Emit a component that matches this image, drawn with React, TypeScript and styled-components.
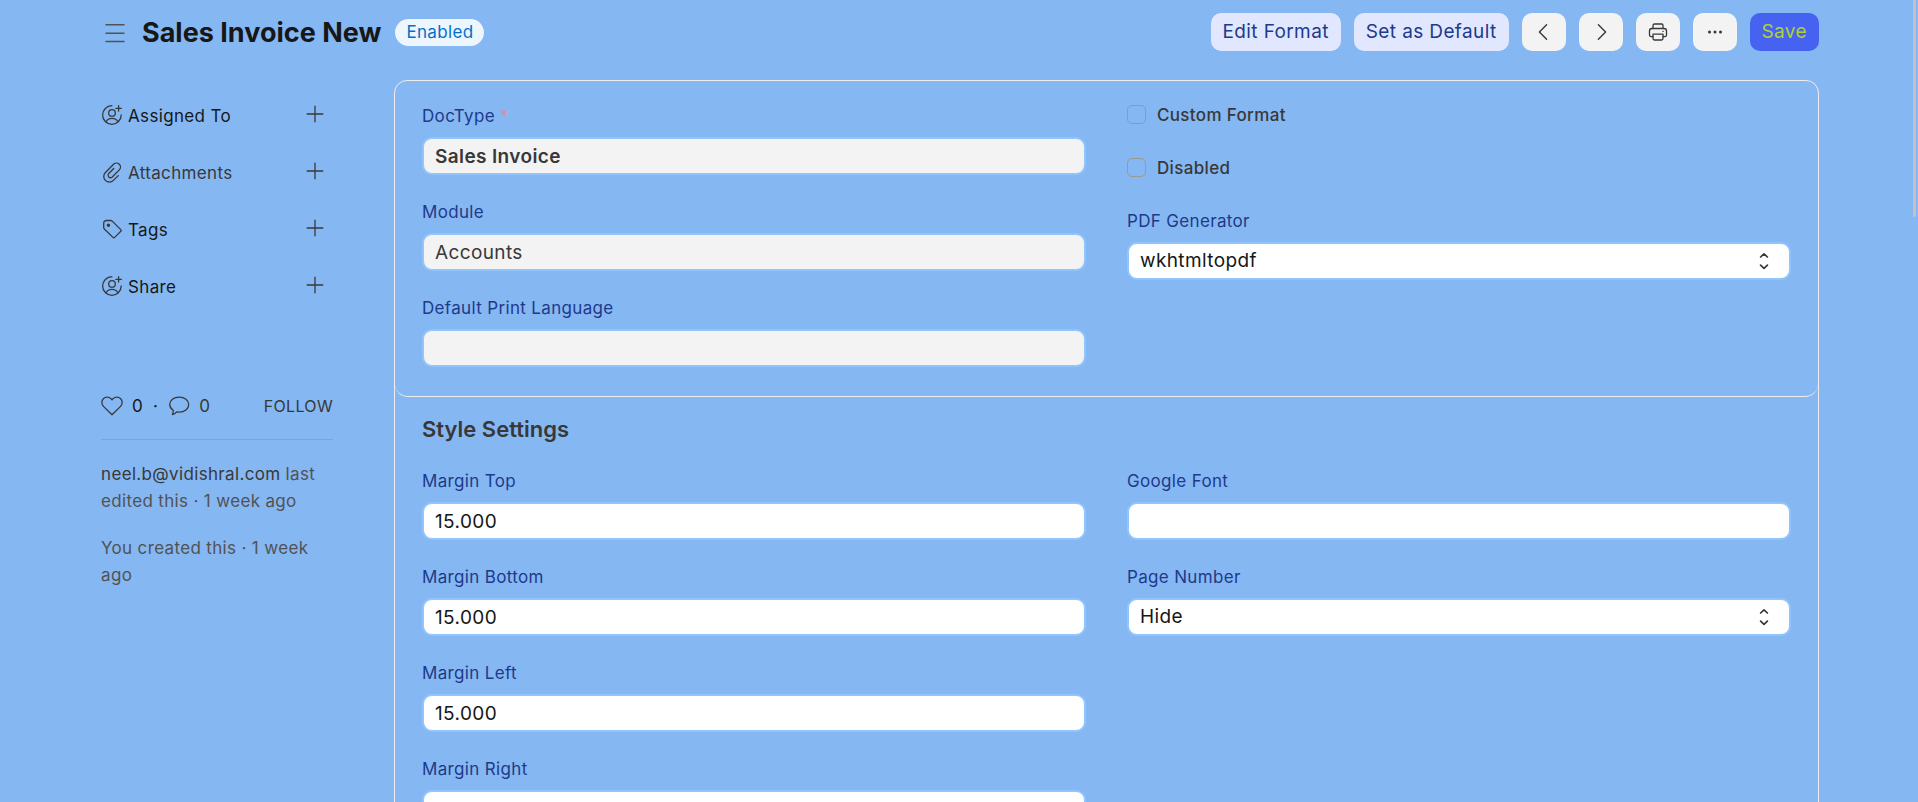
import React, { useId } from "react";
import styled, { createGlobalStyle } from "styled-components";

const GlobalStyle = createGlobalStyle`
  *, *::before, *::after { box-sizing: border-box; }
  html { scrollbar-width: none; background: #85b7f3; }
  body {
    margin: 0;
    background: #85b7f3;
    color: #383838;
    font-family: Inter, "Liberation Sans", sans-serif;
    font-size: 17px;
    line-height: 20px;
    letter-spacing: 0.02em;
  }
  button, input, select { font: inherit; letter-spacing: 0.02em; color: inherit; margin: 0; }
  button { border: 0; background: none; padding: 0; cursor: pointer; }
  svg { display: block; flex: none; }
`;

const Page = styled.div`
  padding: 0 99px 40px 101px;
`;

const Header = styled.header`
  display: flex;
  align-items: center;
  justify-content: space-between;
  height: 64px;
`;

const TitleArea = styled.div`
  display: flex;
  align-items: center;
  padding-top: 1px;
`;

const MenuButton = styled.button`
  padding: 0 4px;
  margin-right: 13px;
`;

const Title = styled.h1`
  margin: 0;
  font-size: 27px;
  line-height: 34px;
  font-weight: 700;
  letter-spacing: normal;
  color: #171717;
`;

const Status = styled.span`
  margin-left: 14px;
  padding: 0 11px;
  border-radius: 14px;
  background: #edf6fd;
  color: #0070cc;
  line-height: 27px;
`;

const Toolbar = styled.div`
  display: flex;
  gap: 13px;
`;

const ToolButton = styled.button<{ $tone?: "soft" | "primary"; $icon?: boolean }>`
  display: flex;
  align-items: center;
  justify-content: center;
  height: 38px;
  width: ${(p) => (p.$icon ? "44px" : "auto")};
  padding: 0 ${(p) => (p.$icon ? "0" : "12px")};
  border-radius: 10px;
  font-size: 19px;
  background: ${(p) =>
    p.$tone === "primary" ? "#4563f0" : p.$tone === "soft" ? "#e0e7ff" : "#f3f3f3"};
  color: ${(p) =>
    p.$tone === "primary" ? "#b1d12f" : p.$tone === "soft" ? "#1e3a8a" : "#383838"};
`;

const Body = styled.div`
  display: grid;
  grid-template-columns: 232px minmax(0, 1fr);
  column-gap: 61px;
  padding-top: 16px;
`;

const Sidebar = styled.aside`
  padding-top: 23px;
`;

const SideList = styled.ul`
  list-style: none;
  margin: 0;
  padding: 0;
  display: flex;
  flex-direction: column;
  gap: 33px;
`;

const SideItem = styled.li<{ $muted?: boolean }>`
  display: flex;
  align-items: center;
  gap: 5px;
  height: 24px;
  color: ${(p) => (p.$muted ? "#383838" : "#171717")};

  > svg { color: #383838; }
`;

const SideText = styled.span`
  padding-top: 2px;
`;

const AddButton = styled.button`
  margin: 0 9px 2px auto;
  color: #383838;
`;

const Reactions = styled.div`
  display: flex;
  align-items: center;
  gap: 10px;
  height: 24px;
  margin-top: 96px;
  color: #171717;
`;

const Count = styled.button<{ $muted?: boolean }>`
  display: flex;
  align-items: center;
  gap: 9px;
  color: ${(p) => (p.$muted ? "#383838" : "#171717")};
  svg { color: #383838; }
`;

const Follow = styled.button`
  margin-left: auto;
  color: #383838;
  font-size: 16px;
`;

const Activity = styled.div`
  margin-top: 21px;
  padding-top: 21px;
  border-top: 1px solid #78a5db;
  color: #525252;
  line-height: 27px;

  p { margin: 0 0 20px; }
  a { color: #383838; text-decoration: none; }
`;

const Form = styled.form`
  border: 1px solid #ededed;
  border-radius: 13px 13px 0 0;
`;

const Section = styled.section<{ $closed?: boolean }>`
  padding: 25px 27px 29px;
  border-bottom: ${(p) => (p.$closed ? "1px solid #ededed" : "0")};
  border-radius: 0 0 13px 13px;
`;

const SectionTitle = styled.h2`
  margin: -7px 0 28px;
  font-size: 22px;
  line-height: 28px;
  font-weight: 600;
  letter-spacing: normal;
  color: #383838;
`;

const Columns = styled.div`
  display: grid;
  grid-template-columns: repeat(2, minmax(0, 1fr));
  column-gap: 41px;
`;

const Column = styled.div`
  display: flex;
  flex-direction: column;
  gap: 27px;
`;

const FieldBox = styled.div`
  display: flex;
  flex-direction: column;
  gap: 11px;
`;

const Label = styled.label`
  color: #1e3a8a;
`;

const Required = styled.span`
  color: #f0868c;
`;

const TextInput = styled.input<{ $strong?: boolean }>`
  width: 100%;
  height: 38px;
  padding: 0 11px;
  border: 2px solid #93c5fd;
  border-radius: 10px;
  outline: 0;
  font-size: 19px;
  background: ${(p) => (p.readOnly ? "#f3f3f3" : "#ffffff")};
  color: ${(p) => (p.readOnly ? "#383838" : "#171717")};
  font-weight: ${(p) => (p.$strong ? 600 : 400)};
`;

const SelectWrap = styled.div`
  position: relative;

  svg {
    position: absolute;
    top: 10px;
    right: 21px;
    pointer-events: none;
    color: #383838;
  }
`;

const Select = styled.select`
  appearance: none;
  display: block;
  width: 100%;
  height: 38px;
  padding: 0 40px 0 11px;
  border: 2px solid #93c5fd;
  border-radius: 10px;
  outline: 0;
  font-size: 19px;
  background: #ffffff;
  color: #171717;
`;

const CheckList = styled.div`
  display: flex;
  flex-direction: column;
  gap: 33px;
  margin: -1px 0 6px;
`;

const CheckLabel = styled.label`
  display: flex;
  align-items: flex-start;
  gap: 11px;
  height: 20px;
  font-weight: 500;
  color: #383838;
`;

const CheckBox = styled.input`
  appearance: none;
  width: 19px;
  height: 19px;
  border: 1px solid #999999;
  border-radius: 5px;
`;

const ScrollThumb = styled.div`
  position: fixed;
  top: 0;
  right: 2px;
  width: 3px;
  height: 27vh;
  border-radius: 0 0 2px 2px;
  background: #c0c1c4;
`;

const stroke = {
  fill: "none",
  stroke: "currentColor",
  strokeLinecap: "round" as const,
  strokeLinejoin: "round" as const,
};

const MenuIcon = () => (
  <svg width="20" height="20" viewBox="0 0 20 20" {...stroke} stroke="#525252" strokeWidth="1.5">
    <path d="M1 1.8h18M1 10.2h18M1 18.4h18" />
  </svg>
);

const PersonAddIcon = () => (
  <svg width="22" height="22" viewBox="0 0 22 22" {...stroke} strokeWidth="1.3">
    <path d="M10.9 1.7a9.3 9.3 0 1 0 9.3 9.3" />
    <circle cx="11" cy="8.9" r="3.3" />
    <path d="M4.9 17.8c1.2-2.3 3.4-3.5 6.1-3.5s4.9 1.2 6.1 3.5" />
    <path d="M17.6 1.7v5.4M14.9 4.4h5.4" />
  </svg>
);

const ClipIcon = () => (
  <svg width="22" height="22" viewBox="0 0 22 22" {...stroke} strokeWidth="1.3">
    <path d="M17.3 14.6 12.4 19.4a5.6 5.6 0 0 1-8 0 5.6 5.6 0 0 1 0-7.9L12.6 3.2a4.1 4.1 0 0 1 5.7 0 4.1 4.1 0 0 1 0 5.7L11 16.2a2.5 2.5 0 0 1-3.5-3.5l5.2-5.2" />
  </svg>
);

const TagIcon = () => (
  <svg width="22" height="22" viewBox="0 0 22 22" {...stroke} strokeWidth="1.3">
    <path d="M2.7 5.3a2.8 2.8 0 0 1 2.8-2.8h4.3a2 2 0 0 1 1.4.6l8.6 8.5a1.2 1.2 0 0 1 0 1.7l-6.1 6.1a1.2 1.2 0 0 1-1.7 0L3.3 11a2 2 0 0 1-.6-1.4z" />
    <circle cx="7.4" cy="7.2" r="1.1" fill="currentColor" />
  </svg>
);

const PlusIcon = () => (
  <svg width="18" height="18" viewBox="0 0 18 18" {...stroke} strokeWidth="1.3">
    <path d="M9 1.2v15.6M1.2 9h15.6" />
  </svg>
);

const HeartIcon = () => (
  <svg width="22" height="22" viewBox="0 0 22 22" {...stroke} strokeWidth="1.3">
    <path d="M11 19.7 2.7 11.6C.3 9.2.3 5.7 2.3 3.7c2.2-2.2 5.7-2.1 7.7 0l1 1.2 1-1.2c2-2.1 5.5-2.2 7.7 0 2 2 2 5.5-.4 7.9z" />
  </svg>
);

const CommentIcon = () => (
  <svg width="22" height="22" viewBox="0 0 22 22" {...stroke} strokeWidth="1.3">
    <path d="M11.2 2.2c5.4 0 9.5 3.2 9.5 7.4s-4.1 7.5-9.5 7.5c-.9 0-1.8-.1-2.6-.3-.8 1.6-2.2 2.6-4.3 2.7.8-1.2 1.1-2.6.9-4.2C3.2 14 1.7 12 1.7 9.6c0-4.2 4.1-7.4 9.5-7.4z" />
  </svg>
);

const ChevronIcon = ({ next }: { next?: boolean }) => (
  <svg width="20" height="20" viewBox="0 0 20 20" {...stroke} strokeWidth="1.4">
    <path d={next ? "M7.4 2.8 14.6 10l-7.2 7.2" : "M12.6 2.8 5.4 10l7.2 7.2"} />
  </svg>
);

const PrinterIcon = () => (
  <svg width="20" height="20" viewBox="0 0 20 20" {...stroke} strokeWidth="1.3">
    <path d="M5 6.5V3.4A1.4 1.4 0 0 1 6.4 2h7.2A1.4 1.4 0 0 1 15 3.4v3.1" />
    <path d="M5 14.6H3.2a1.7 1.7 0 0 1-1.7-1.7V9A2.5 2.5 0 0 1 4 6.5h12A2.5 2.5 0 0 1 18.5 9v3.9a1.7 1.7 0 0 1-1.7 1.7H15" />
    <path d="M5 12.2h10v4.4a1.4 1.4 0 0 1-1.4 1.4H6.4A1.4 1.4 0 0 1 5 16.6z" />
    <path d="M15 9.4h.1" />
  </svg>
);

const MoreIcon = () => (
  <svg width="20" height="20" viewBox="0 0 20 20" fill="currentColor">
    <circle cx="4.5" cy="10" r="1.5" />
    <circle cx="10" cy="10" r="1.5" />
    <circle cx="15.5" cy="10" r="1.5" />
  </svg>
);

const SortIcon = () => (
  <svg width="12" height="18" viewBox="0 0 12 18" {...stroke} strokeWidth="1.7">
    <path d="M2.6 5 6 1.8 9.4 5M2.6 13.2 6 16.4l3.4-3.2" />
  </svg>
);

type FieldProps = {
  label: string;
  value: string;
  readOnly?: boolean;
  strong?: boolean;
  required?: boolean;
};

function Field({ label, value, readOnly, strong, required }: FieldProps) {
  const id = useId();
  return (
    <FieldBox>
      <Label htmlFor={id}>
        {label}
        {required && <Required> *</Required>}
      </Label>
      <TextInput id={id} type="text" defaultValue={value} readOnly={readOnly} $strong={strong} />
    </FieldBox>
  );
}

function SelectField({ label, options }: { label: string; options: string[] }) {
  const id = useId();
  return (
    <FieldBox>
      <Label htmlFor={id}>{label}</Label>
      <SelectWrap>
        <Select id={id}>
          {options.map((o) => (
            <option key={o}>{o}</option>
          ))}
        </Select>
        <SortIcon />
      </SelectWrap>
    </FieldBox>
  );
}

function Check({ label }: { label: string }) {
  return (
    <CheckLabel>
      <CheckBox type="checkbox" />
      {label}
    </CheckLabel>
  );
}

const sideItems = [
  { label: "Assigned To", Icon: PersonAddIcon },
  { label: "Attachments", Icon: ClipIcon, muted: true },
  { label: "Tags", Icon: TagIcon },
  { label: "Share", Icon: PersonAddIcon },
];

export default function App() {
  return (
    <>
      <GlobalStyle />
      <Page>
        <Header>
          <TitleArea>
            <MenuButton aria-label="Toggle sidebar">
              <MenuIcon />
            </MenuButton>
            <Title>Sales Invoice New</Title>
            <Status>Enabled</Status>
          </TitleArea>
          <Toolbar>
            <ToolButton $tone="soft">Edit Format</ToolButton>
            <ToolButton $tone="soft">Set as Default</ToolButton>
            <ToolButton $icon aria-label="Previous">
              <ChevronIcon />
            </ToolButton>
            <ToolButton $icon aria-label="Next">
              <ChevronIcon next />
            </ToolButton>
            <ToolButton $icon aria-label="Print">
              <PrinterIcon />
            </ToolButton>
            <ToolButton $icon aria-label="More">
              <MoreIcon />
            </ToolButton>
            <ToolButton $tone="primary">Save</ToolButton>
          </Toolbar>
        </Header>

        <Body>
          <Sidebar>
            <SideList>
              {sideItems.map(({ label, Icon, muted }) => (
                <SideItem key={label} $muted={muted}>
                  <Icon />
                  <SideText>{label}</SideText>
                  <AddButton aria-label={`Add ${label}`}>
                    <PlusIcon />
                  </AddButton>
                </SideItem>
              ))}
            </SideList>
            <Reactions>
              <Count aria-label="Likes">
                <HeartIcon />0
              </Count>
              <span>·</span>
              <Count aria-label="Comments" $muted>
                <CommentIcon />0
              </Count>
              <Follow>FOLLOW</Follow>
            </Reactions>
            <Activity>
              <p>
                <a href="#user">neel.b@vidishral.com</a> last edited this · 1 week ago
              </p>
              <p>You created this · 1 week ago</p>
            </Activity>
          </Sidebar>

          <Form>
            <Section $closed>
              <Columns>
                <Column>
                  <Field label="DocType" value="Sales Invoice" readOnly strong required />
                  <Field label="Module" value="Accounts" readOnly />
                  <Field label="Default Print Language" value="" readOnly />
                </Column>
                <Column>
                  <CheckList>
                    <Check label="Custom Format" />
                    <Check label="Disabled" />
                  </CheckList>
                  <SelectField label="PDF Generator" options={["wkhtmltopdf"]} />
                </Column>
              </Columns>
            </Section>
            <Section>
              <SectionTitle>Style Settings</SectionTitle>
              <Columns>
                <Column>
                  <Field label="Margin Top" value="15.000" />
                  <Field label="Margin Bottom" value="15.000" />
                  <Field label="Margin Left" value="15.000" />
                  <Field label="Margin Right" value="15.000" />
                </Column>
                <Column>
                  <Field label="Google Font" value="" />
                  <SelectField label="Page Number" options={["Hide"]} />
                </Column>
              </Columns>
            </Section>
          </Form>
        </Body>
      </Page>
      <ScrollThumb />
    </>
  );
}
